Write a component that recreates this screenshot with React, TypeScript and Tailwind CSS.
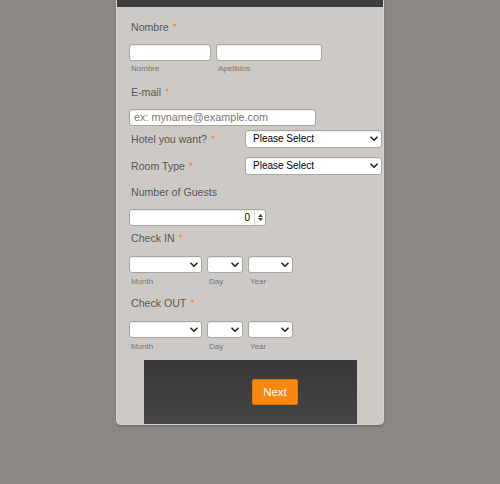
import React from 'react'

const Star = () => <span className="ml-[4px] text-[#f5861f]">*</span>

const Label = ({ text, req, className = '' }: { text: string; req?: boolean; className?: string }) => (
  <div className={`pl-[2px] h-[15px] text-[10.6px] leading-[15px] text-[#585858] ${className}`}>
    {text}
    {req && <Star />}
  </div>
)

const Sub = ({ text, w }: { text: string; w: string }) => (
  <div className={`${w} pl-[2px] text-[8px] leading-[10px] text-[#757575]`}>{text}</div>
)

const fieldCls =
  'bg-white border border-[#a9a6a1] rounded-[3px] shadow-[inset_0_1px_1px_rgba(0,0,0,0.08)]'

const Chevron = ({ top }: { top: string }) => (
  <svg width="8" height="6" viewBox="0 0 8 6" className={`absolute right-[3px] ${top}`}>
    <path d="M1 1.2 L4 4.2 L7 1.2" fill="none" stroke="#222" strokeWidth="1.6" strokeLinecap="round" strokeLinejoin="round" />
  </svg>
)

const Select = ({ w, text }: { w: string; text?: string }) =>
  text ? (
    <div className={`relative ${w} h-[18px] ${fieldCls}`}>
      <span className="absolute left-[7px] top-0 text-[10px] leading-[16px] text-black">{text}</span>
      <Chevron top="top-[5px]" />
    </div>
  ) : (
    <div className={`relative ${w} h-[17px] ${fieldCls}`}>
      <Chevron top="top-[5px]" />
    </div>
  )

const DateRow = () => (
  <>
    <div className="mt-[10px] flex gap-[5px]">
      <Select w="w-[73px]" />
      <Select w="w-[36px]" />
      <Select w="w-[45px]" />
    </div>
    <div className="mt-[4px] flex h-[10px]">
      <Sub text="Month" w="w-[78px]" />
      <Sub text="Day" w="w-[41px]" />
      <Sub text="Year" w="w-[45px]" />
    </div>
  </>
)

export default function App() {
  return (
    <div
      className="min-h-[484px] bg-[#8b8782]"
      style={{ fontFamily: '"Liberation Sans", Arial, sans-serif' }}
    >
      <div className="mx-auto w-[268px] bg-[#cdcac5] rounded-b-[5px] border-x border-[#d6d4d0] shadow-[0_2px_2px_rgba(0,0,0,0.15)] pb-[1px]">
        <div className="h-[7px] bg-[#3e3e3e]" />
        <div className="pl-[12px] pr-[1px]">
          <Label text="Nombre" req className="mt-[13px]" />
          <div className="mt-[9px] flex gap-[5px]">
            <div className={`w-[82px] h-[17px] ${fieldCls}`} />
            <div className={`w-[106px] h-[17px] ${fieldCls}`} />
          </div>
          <div className="mt-[3px] flex h-[10px]">
            <Sub text="Nombre" w="w-[87px]" />
            <Sub text="Apellidos" w="w-[106px]" />
          </div>

          <Label text="E-mail" req className="mt-[11px]" />
          <div className={`mt-[9px] w-[187px] h-[17px] ${fieldCls} flex items-center pl-[4px]`}>
            <span className="text-[10.8px] leading-[15px] text-[#777]">ex: myname@example.com</span>
          </div>

          <div className="mt-[4px] flex items-center justify-between">
            <Label text="Hotel you want?" req />
            <Select w="w-[137px]" text="Please Select" />
          </div>
          <div className="mt-[9px] flex items-center justify-between">
            <Label text="Room Type" req />
            <Select w="w-[137px]" text="Please Select" />
          </div>

          <Label text="Number of Guests" className="mt-[10px]" />
          <div className={`mt-[9px] w-[137px] h-[17px] ${fieldCls} flex items-stretch`}>
            <div className="flex-1 text-right pr-[4px] text-[10px] leading-[15px] text-black">0</div>
            <div className="w-[11px] border-l border-[#d8d8d8] flex flex-col items-center justify-center gap-[1px]">
              <svg width="5" height="3" viewBox="0 0 5 3"><path d="M0 3 L2.5 0 L5 3 Z" fill="#444" /></svg>
              <svg width="5" height="3" viewBox="0 0 5 3"><path d="M0 0 L2.5 3 L5 0 Z" fill="#444" /></svg>
            </div>
          </div>

          <Label text="Check IN" req className="mt-[5px]" />
          <DateRow />

          <Label text="Check OUT" req className="mt-[9px]" />
          <DateRow />
        </div>

        <div className="mt-[8px] ml-[27px] w-[213px] h-[64px] bg-gradient-to-b from-[#383838] to-[#464646] pt-[19px] pl-[108px]">
          <button className="w-[46px] h-[26px] rounded-[2px] bg-[#f8870e] border border-[#e0760a] text-white text-[11.5px] leading-[24px]">
            Next
          </button>
        </div>
      </div>
    </div>
  )
}
